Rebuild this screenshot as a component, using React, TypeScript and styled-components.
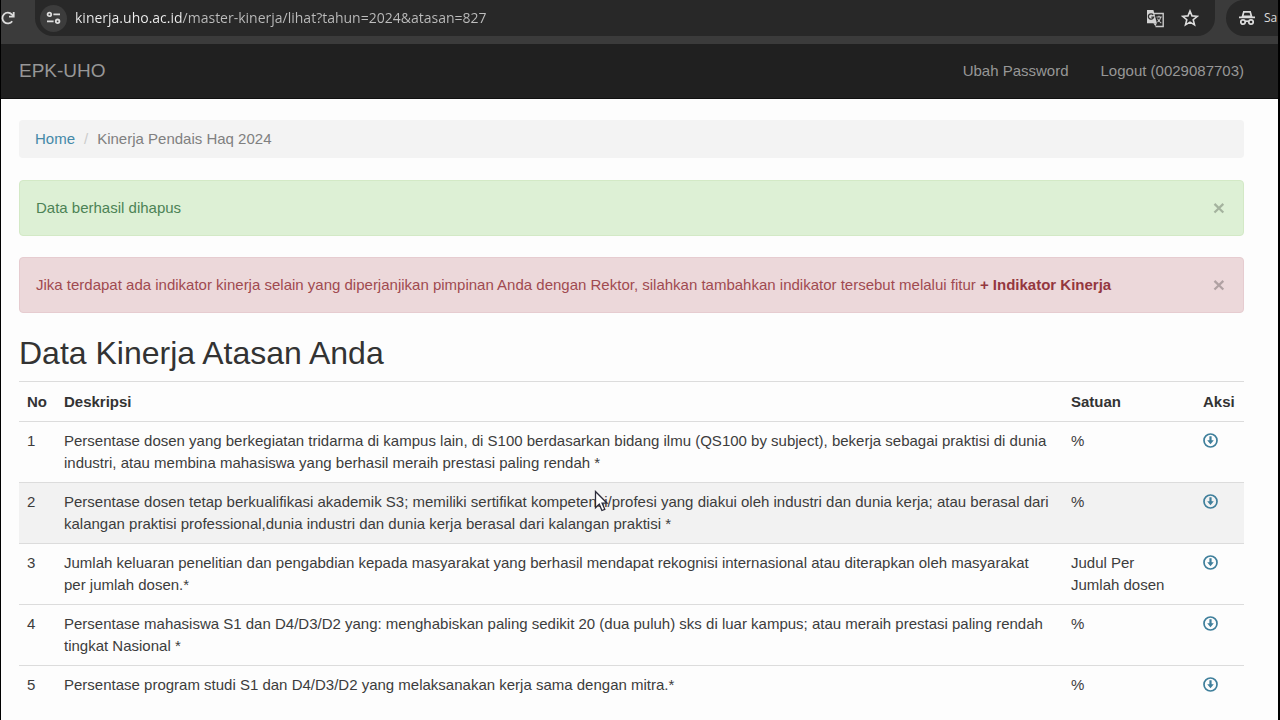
import React, { useState } from "react";
import styled, { createGlobalStyle } from "styled-components";

const GlobalStyle = createGlobalStyle`
  *, *::before, *::after { box-sizing: border-box; }
  html { background: #fdfdfd; overflow: hidden; }
  body {
    margin: 0;
    background: #fdfdfd;
    color: #3c3c3c;
    font: 15px/22px "Liberation Sans", Arial, sans-serif;
  }
`;

const Page = styled.div`
  position: relative;
  min-height: 100vh;
  border: solid #000;
  border-width: 0 2px 0 1px;
`;

const Toolbar = styled.div`
  display: flex;
  align-items: flex-start;
  height: 44px;
  overflow: hidden;
  background: #3b3b3b;
  color: #dcdcdc;
`;

const IconButton = styled.button`
  display: flex;
  align-items: center;
  justify-content: center;
  flex: none;
  padding: 0;
  border: 0;
  background: none;
  color: inherit;
`;

const ReloadButton = styled(IconButton)`
  width: 34px;
  height: 36px;
  justify-content: flex-start;
`;

const AddressBar = styled.div`
  display: flex;
  align-items: center;
  flex: 1;
  height: 36px;
  padding: 0 16px 0 5px;
  border-radius: 0 0 18px 18px;
  background: #282828;
`;

const SiteButton = styled(IconButton)`
  width: 27px;
  height: 27px;
  border-radius: 50%;
  background: #3c3c3c;
`;

/* The host part of the address is brighter than the path after it. */
const Address = styled.input`
  flex: 1;
  min-width: 0;
  margin-left: 8px;
  padding: 0;
  border: 0;
  outline: 0;
  background: linear-gradient(90deg, #f0f0f0 107px, #bdbdbd 107px);
  background-clip: text;
  -webkit-background-clip: text;
  color: #bdbdbd;
  -webkit-text-fill-color: transparent;
  font: 14px/22px "Open Sans", "Noto Sans", sans-serif;
`;

const BarIcons = styled.div`
  display: flex;
  gap: 16px;
`;

const ProfileChip = styled.button`
  display: flex;
  align-items: center;
  gap: 8px;
  width: 52px;
  height: 36px;
  margin-left: 11px;
  padding: 0 0 0 12px;
  overflow: hidden;
  border: 0;
  border-radius: 18px 0 0 18px;
  background: #282828;
  color: #dcdcdc;
  font: 12px/20px "Open Sans", "Noto Sans", sans-serif;
  white-space: nowrap;
  svg { flex: none; }
`;

const Navbar = styled.nav`
  display: flex;
  align-items: center;
  justify-content: space-between;
  height: 55px;
  padding: 0 34px 0 18px;
  border-bottom: 1px solid #101010;
  background: #202020;
`;

const Brand = styled.a`
  color: #979797;
  font-size: 19px;
  text-decoration: none;
`;

const NavLinks = styled.div`
  display: flex;
  gap: 32px;
  a { color: #979797; text-decoration: none; }
`;

const Content = styled.main`
  padding: 21px 34px 0 18px;
`;

const Breadcrumb = styled.ol`
  display: flex;
  margin: 0 0 22px;
  padding: 8px 16px;
  list-style: none;
  border-radius: 4px;
  background: #f3f3f3;
  color: #808080;

  a { color: #4489a8; text-decoration: none; }
  li + li::before { content: "/"; padding: 0 9px; color: #ccc; }
`;

const Alert = styled.div<{ $tone: "success" | "danger" }>`
  display: flex;
  align-items: center;
  justify-content: space-between;
  margin-bottom: 21px;
  padding: 16px;
  border: 1px solid ${(p) => (p.$tone === "success" ? "#d3e9c6" : "#e6ccd0")};
  border-radius: 4px;
  background: ${(p) => (p.$tone === "success" ? "#ddf0d5" : "#ecd8da")};
  color: ${(p) => (p.$tone === "success" ? "#4c8355" : "#a04a50")};
  strong { color: #94373f; }
`;

const CloseButton = styled(IconButton)`
  width: 16px;
  height: 22px;
  color: #000;
  opacity: 0.25;
  font: bold 21px/22px "Liberation Sans", Arial, sans-serif;
`;

const Heading = styled.h2`
  margin: 0 0 9px;
  font-size: 32px;
  line-height: 38px;
  font-weight: 400;
  color: #333;
`;

const Table = styled.table`
  width: 100%;
  table-layout: fixed;
  border-collapse: collapse;

  th, td {
    padding: 8px;
    border-top: 1px solid #dcdcdc;
    text-align: left;
    vertical-align: top;
  }
  th { padding: 9px 8px 8px; color: #333; }
  td:nth-child(2) { padding-right: 12px; }
  td:nth-child(3) { padding-right: 24px; }
`;

const Row = styled.tr<{ $highlighted: boolean }>`
  background: ${(p) => (p.$highlighted ? "#f2f2f2" : "transparent")};
`;

const Column = styled.col<{ $width?: number }>`
  width: ${(p) => (p.$width ? `${p.$width}px` : "auto")};
`;

const ActionLink = styled.a`
  display: block;
  height: 22px;
  padding-top: 3px;
  color: #3f7f9b;
  svg { display: block; }
`;

const Pointer = styled.svg`
  position: absolute;
  left: 593px;
  top: 490px;
  pointer-events: none;
`;

const ReloadIcon = () => (
  <svg width="15" height="16" viewBox="0 0 15 16" fill="none" stroke="currentColor" strokeWidth="1.8" aria-hidden="true">
    <path d="M11.2 11.2A5.4 5.4 0 1 1 10.8 4.4L12.6 6.4" />
    <path d="M12.7 2v4.7H8" />
  </svg>
);

const TuneIcon = () => (
  <svg width="15" height="14" viewBox="0 0 15 14" fill="none" stroke="currentColor" strokeWidth="1.8" aria-hidden="true">
    <circle cx="3.4" cy="3.4" r="1.8" />
    <path d="M7.4 3.4H14M1 10.3h6.6" />
    <circle cx="11.6" cy="10.3" r="1.8" />
  </svg>
);

const TranslateIcon = () => (
  <svg width="19" height="19" viewBox="0 0 19 19" aria-hidden="true">
    <path d="M7.5 4.5h9.7v13H9.5" fill="none" stroke="#c9c9c9" strokeWidth="1.4" />
    <path d="M1 1h6.4l3.5 13.2H1z" fill="#d2d2d2" />
    <path d="M7.4 14.2h3.5l-1.5 3z" fill="#d2d2d2" />
    <path d="M7.2 5.8A2.7 2.7 0 1 0 7.7 8.2H5.3" fill="none" stroke="#333" strokeWidth="1.3" />
    <path d="M10.4 8h5.4M13 6.7V8M14.8 8c-.5 2.5-1.7 4-3.3 5.1M11.5 9.6c.8 2 2.2 3.4 3.8 4.5" fill="none" stroke="#c9c9c9" strokeWidth="1.1" />
  </svg>
);

const StarIcon = () => (
  <svg width="18" height="18" viewBox="0 0 18 18" fill="none" stroke="currentColor" strokeWidth="1.6" aria-hidden="true">
    <path d="m9 2 2 4.9 5.3.4-4.1 3.4 1.3 5.2L9 13.1l-4.5 2.8 1.3-5.2-4.1-3.4L7 6.9z" />
  </svg>
);

const IncognitoIcon = () => (
  <svg width="18" height="16" viewBox="0 0 18 16" fill="none" stroke="currentColor" strokeWidth="1.7" aria-hidden="true">
    <path d="M4.5 6.4 5.8 1.8h6.4l1.3 4.6z" />
    <path d="M1 7.4h16" />
    <circle cx="5" cy="12" r="2.2" />
    <circle cx="13" cy="12" r="2.2" />
    <path d="M7.2 11.5q1.8-.8 3.6 0" />
  </svg>
);

const DownloadIcon = () => (
  <svg width="15" height="15" viewBox="0 0 15 15" aria-hidden="true">
    <circle cx="7.5" cy="7.5" r="6.5" fill="none" stroke="currentColor" strokeWidth="1.7" />
    <path d="M6.4 3.3h2.2v4h2.2L7.5 11.3 4.2 7.3h2.2z" fill="currentColor" />
  </svg>
);

const rows = [
  {
    text: "Persentase dosen yang berkegiatan tridarma di kampus lain, di S100 berdasarkan bidang ilmu (QS100 by subject), bekerja sebagai praktisi di dunia industri, atau membina mahasiswa yang berhasil meraih prestasi paling rendah *",
    unit: "%",
  },
  {
    text: "Persentase dosen tetap berkualifikasi akademik S3; memiliki sertifikat kompetensi/profesi yang diakui oleh industri dan dunia kerja; atau berasal dari kalangan praktisi professional,dunia industri dan dunia kerja berasal dari kalangan praktisi *",
    unit: "%",
    highlighted: true,
  },
  {
    text: "Jumlah keluaran penelitian dan pengabdian kepada masyarakat yang berhasil mendapat rekognisi internasional atau diterapkan oleh masyarakat per jumlah dosen.*",
    unit: "Judul Per Jumlah dosen",
  },
  {
    text: "Persentase mahasiswa S1 dan D4/D3/D2 yang: menghabiskan paling sedikit 20 (dua puluh) sks di luar kampus; atau meraih prestasi paling rendah tingkat Nasional *",
    unit: "%",
  },
  {
    text: "Persentase program studi S1 dan D4/D3/D2 yang melaksanakan kerja sama dengan mitra.*",
    unit: "%",
  },
];

function Notice({ tone, children }: { tone: "success" | "danger"; children: React.ReactNode }) {
  const [open, setOpen] = useState(true);
  if (!open) return null;
  return (
    <Alert $tone={tone} role="alert">
      <span>{children}</span>
      <CloseButton type="button" aria-label="Tutup" onClick={() => setOpen(false)}>×</CloseButton>
    </Alert>
  );
}

export default function App() {
  return (
    <Page>
      <GlobalStyle />
      <Toolbar>
        <ReloadButton type="button" aria-label="Muat ulang"><ReloadIcon /></ReloadButton>
        <AddressBar>
          <SiteButton type="button" aria-label="Info situs"><TuneIcon /></SiteButton>
          <Address
            type="text"
            aria-label="Alamat"
            defaultValue="kinerja.uho.ac.id/master-kinerja/lihat?tahun=2024&amp;atasan=827"
          />
          <BarIcons>
            <IconButton type="button" aria-label="Terjemahkan"><TranslateIcon /></IconButton>
            <IconButton type="button" aria-label="Bookmark"><StarIcon /></IconButton>
          </BarIcons>
        </AddressBar>
        <ProfileChip type="button"><IncognitoIcon />Sa</ProfileChip>
      </Toolbar>
      <Navbar>
        <Brand href="#">EPK-UHO</Brand>
        <NavLinks>
          <a href="#password">Ubah Password</a>
          <a href="#logout">Logout (0029087703)</a>
        </NavLinks>
      </Navbar>
      <Content>
        <Breadcrumb>
          <li><a href="#home">Home</a></li>
          <li>Kinerja Pendais Haq 2024</li>
        </Breadcrumb>
        <Notice tone="success">Data berhasil dihapus</Notice>
        <Notice tone="danger">
          Jika terdapat ada indikator kinerja selain yang diperjanjikan pimpinan Anda dengan Rektor, silahkan tambahkan indikator tersebut melalui fitur <strong>+ Indikator Kinerja</strong>
        </Notice>
        <Heading>Data Kinerja Atasan Anda</Heading>
        <Table>
          <colgroup>
            <Column $width={37} />
            <Column />
            <Column $width={132} />
            <Column $width={49} />
          </colgroup>
          <thead>
            <tr><th>No</th><th>Deskripsi</th><th>Satuan</th><th>Aksi</th></tr>
          </thead>
          <tbody>
            {rows.map((row, i) => (
              <Row key={i} $highlighted={Boolean(row.highlighted)}>
                <td>{i + 1}</td>
                <td>{row.text}</td>
                <td>{row.unit}</td>
                <td><ActionLink href={`#unduh-${i + 1}`} aria-label="Unduh"><DownloadIcon /></ActionLink></td>
              </Row>
            ))}
          </tbody>
        </Table>
      </Content>
      <Pointer width="15" height="23" viewBox="0 0 15 23" aria-hidden="true">
        <path d="M1.5 1.5v16.2l3.8-3.5 2.6 6.3 2.9-1.2-2.7-6.1h5z" fill="#fff" stroke="#2b2b3a" strokeWidth="1.3" />
      </Pointer>
    </Page>
  );
}
